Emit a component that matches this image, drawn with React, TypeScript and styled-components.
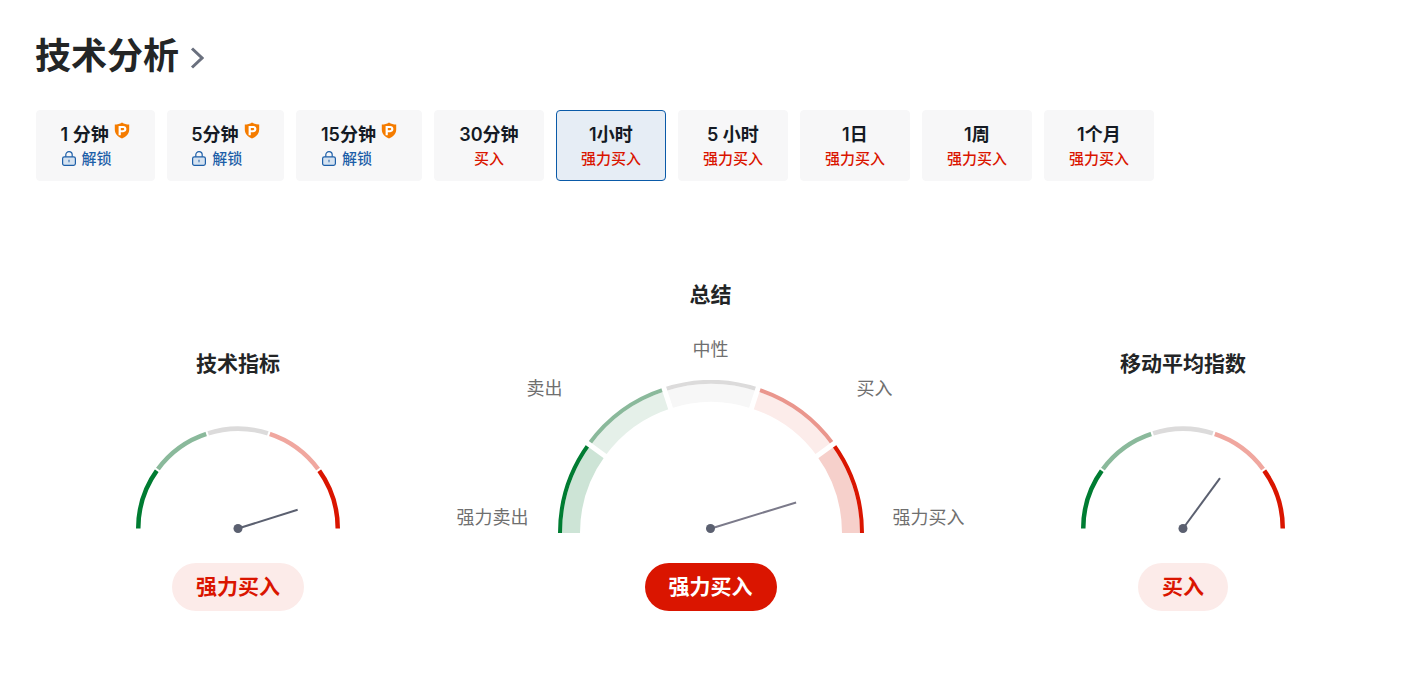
import React from 'react'
import styled, { createGlobalStyle } from 'styled-components'

const GlobalStyle = createGlobalStyle`
  body {
    margin: 0;
    background: #fff;
    font-family: Inter, 'Noto Sans CJK SC', sans-serif;
    color: #232526;
  }
`

const Page = styled.div`
  padding: 36px 36px 0;
  height: 653px;
`

const TitleRow = styled.div`
  display: flex;
  align-items: center;
  gap: 11px;
  height: 40px;
  margin-bottom: 34px;
`

const Title = styled.h2`
  margin: 0 0 0 -1px;
  font-size: 36px;
  line-height: 40px;
  font-weight: 700;
  color: #232526;
`

const Tabs = styled.div`
  display: flex;
  gap: 12px;
`

const Tab = styled.div<{ $active?: boolean; $locked?: boolean }>`
  box-sizing: border-box;
  height: 71px;
  min-width: 110px;
  padding: 0 23.5px;
  display: flex;
  flex-direction: column;
  justify-content: center;
  align-items: ${(p) => (p.$locked ? 'flex-start' : 'center')};
  gap: 2px;
  border-radius: 4px;
  background: ${(p) => (p.$active ? '#e6edf5' : '#f7f7f8')};
  border: 1px solid ${(p) => (p.$active ? '#0a5aa8' : '#f7f7f8')};
`

const TabName = styled.div`
  display: flex;
  align-items: flex-start;
  gap: 5.5px;
  font-size: 18px;
  line-height: 24px;
  font-weight: 600;
  color: #141a24;
  white-space: nowrap;
`

const TabSignal = styled.div`
  font-size: 15px;
  line-height: 20px;
  font-weight: 500;
  color: #da1500;
  white-space: nowrap;
`

const Unlock = styled.div`
  display: flex;
  align-items: center;
  gap: 6px;
  margin-left: 1px;
  font-size: 15px;
  line-height: 20px;
  font-weight: 500;
  color: #1e5fa8;
  white-space: nowrap;
`

const GaugeGrid = styled.div`
  display: grid;
  grid-template-columns: 404px 1fr 404px;
  align-items: end;
  margin-top: 100px;
`

const GaugeColumn = styled.div`
  display: flex;
  flex-direction: column;
  align-items: center;
`

const GaugeTitle = styled.div<{ $large?: boolean }>`
  font-size: 21px;
  line-height: 28px;
  font-weight: 600;
  color: #232526;
  margin-bottom: ${(p) => (p.$large ? '71px' : '48px')};
`

const Dial = styled.div`
  position: relative;
  display: flex;
  margin-bottom: 30px;
`

const DialLabel = styled.span<{ $x: number; $y: number }>`
  position: absolute;
  left: ${(p) => p.$x}px;
  top: ${(p) => p.$y}px;
  transform: translate(-50%, -50%);
  font-size: 18px;
  line-height: 24px;
  color: #6f6f6f;
  white-space: nowrap;
`

const Signal = styled.div<{ $solid?: boolean }>`
  box-sizing: border-box;
  height: 48px;
  padding: 0 24px 4px;
  display: flex;
  align-items: center;
  border-radius: 24px;
  font-size: 21px;
  font-weight: 600;
  background: ${(p) => (p.$solid ? '#da1500' : '#fcebe9')};
  color: ${(p) => (p.$solid ? '#fff' : '#da1500')};
`

function Chevron() {
  return (
    <svg width="14" height="24" viewBox="0 0 14 24" fill="none" style={{ marginTop: 4 }}>
      <path d="M2 2.5 L12 12 L2 21.5" stroke="#6a707e" strokeWidth="3" />
    </svg>
  )
}

function ProBadge() {
  return (
    <svg width="16" height="17" viewBox="0 0 16 17" style={{ marginTop: -1 }}>
      <path
        d="M.8 2.6 C3.4 2.6 5.8 1.8 8 .4 C10.2 1.8 12.6 2.6 15.2 2.6 V7.6 C15.2 11.8 12.2 15 8 16.6 C3.8 15 .8 11.8 .8 7.6 Z"
        fill="#f57c00"
      />
      <path
        d="M4.6 4 H9.2 C11.2 4 12.4 5.3 12.4 7.1 C12.4 8.9 11.2 10.2 9.2 10.2 H6.8 V13.2 H4.6 Z"
        fill="#fff"
      />
      <path d="M6.8 5.9 H9 C9.7 5.9 10.2 6.4 10.2 7.1 C10.2 7.8 9.7 8.3 9 8.3 H6.8 Z" fill="#f57c00" />
    </svg>
  )
}

function LockIcon() {
  return (
    <svg width="14" height="15" viewBox="0 0 14 15" fill="none">
      <path d="M3.8 6 V3.8 C3.8 2 5.2 .7 7 .7 C8.8 .7 10.2 2 10.2 3.8 V6" stroke="#1e5fa8" strokeWidth="1.2" />
      <rect x=".6" y="5.8" width="12.8" height="8.6" rx="1.8" fill="#d5e2f0" stroke="#1e5fa8" strokeWidth="1.2" />
      <rect x="6.3" y="8.6" width="1.4" height="2.8" rx=".7" fill="#5d8cc0" />
    </svg>
  )
}

const rings = [
  { stroke: '#007c32', fill: '#cde4d6' },
  { stroke: '#8ab99b', fill: '#e5f0e9' },
  { stroke: '#dcdbdb', fill: '#f7f7f7' },
  { stroke: '#f0a79f', fill: '#fcecea' },
  { stroke: '#da1500', fill: '#f6d0cb' },
]

const bigRings = ['#007c32', '#8ab99b', '#dcdbdb', '#ea968d', '#da1500']

function polar(cx: number, cy: number, r: number, deg: number) {
  const a = (deg * Math.PI) / 180
  return [cx - r * Math.cos(a), cy - r * Math.sin(a)]
}

function arc(cx: number, cy: number, r: number, from: number, to: number) {
  const [x1, y1] = polar(cx, cy, r, from)
  const [x2, y2] = polar(cx, cy, r, to)
  return `M${x1} ${y1} A${r} ${r} 0 0 1 ${x2} ${y2}`
}

function GaugeDrawing({ large, needle }: { large?: boolean; needle: number }) {
  const R = large ? 153 : 102
  const cx = R
  const cy = large ? 153 : 102.5
  const pivotY = large ? 148.5 : 102.5
  const lineWidth = large ? 4 : 4.5
  const gap = large ? 5 : 2
  const length = large ? 89 : 62.5
  const tip = polar(cx, pivotY, length, 180 - needle)
  return (
    <svg width={R * 2} height={large ? 153 : 107} viewBox={`0 0 ${R * 2} ${large ? 153 : 107}`} fill="none">
      {rings.map((ring, i) => (
        <g key={i}>
          {large && (
            <path d={arc(cx, cy, 140, i * 36, (i + 1) * 36)} stroke={ring.fill} strokeWidth={18} />
          )}
          <path
            d={arc(cx, cy, R - lineWidth / 2, i * 36, (i + 1) * 36)}
            stroke={large ? bigRings[i] : ring.stroke}
            strokeWidth={lineWidth}
          />
        </g>
      ))}
      {[36, 72, 108, 144].map((deg) => {
        const [x1, y1] = polar(cx, cy, R - (large ? 30 : 8), deg)
        const [x2, y2] = polar(cx, cy, R + 2, deg)
        return <line key={deg} x1={x1} y1={y1} x2={x2} y2={y2} stroke="#fff" strokeWidth={gap} />
      })}
      <line
        x1={cx}
        y1={pivotY}
        x2={tip[0]}
        y2={tip[1]}
        stroke={large ? '#7b7a8a' : '#5b6070'}
        strokeWidth="2"
      />
      <circle cx={large ? cx - 0.5 : cx} cy={pivotY} r="4.5" fill="#5b6070" />
    </svg>
  )
}

const tabs = [
  { name: '1 分钟', locked: true },
  { name: '5分钟', locked: true },
  { name: '15分钟', locked: true },
  { name: '30分钟', signal: '买入' },
  { name: '1小时', signal: '强力买入', active: true },
  { name: '5 小时', signal: '强力买入' },
  { name: '1日', signal: '强力买入' },
  { name: '1周', signal: '强力买入' },
  { name: '1个月', signal: '强力买入' },
]

export default function App() {
  return (
    <Page>
      <GlobalStyle />
      <TitleRow>
        <Title>技术分析</Title>
        <Chevron />
      </TitleRow>
      <Tabs>
        {tabs.map((tab) => (
          <Tab key={tab.name} $active={tab.active} $locked={tab.locked}>
            <TabName>
              {tab.name}
              {tab.locked && <ProBadge />}
            </TabName>
            {tab.locked ? (
              <Unlock>
                <LockIcon />
                解锁
              </Unlock>
            ) : (
              <TabSignal>{tab.signal}</TabSignal>
            )}
          </Tab>
        ))}
      </Tabs>
      <GaugeGrid>
        <GaugeColumn>
          <GaugeTitle>技术指标</GaugeTitle>
          <Dial>
            <GaugeDrawing needle={17.4} />
          </Dial>
          <Signal>强力买入</Signal>
        </GaugeColumn>
        <GaugeColumn>
          <GaugeTitle $large>总结</GaugeTitle>
          <Dial>
            <GaugeDrawing large needle={17} />
            <DialLabel $x={153} $y={-30}>中性</DialLabel>
            <DialLabel $x={-13} $y={9}>卖出</DialLabel>
            <DialLabel $x={317} $y={9}>买入</DialLabel>
            <DialLabel $x={-65} $y={138}>强力卖出</DialLabel>
            <DialLabel $x={371} $y={138}>强力买入</DialLabel>
          </Dial>
          <Signal $solid>强力买入</Signal>
        </GaugeColumn>
        <GaugeColumn>
          <GaugeTitle>移动平均指数</GaugeTitle>
          <Dial>
            <GaugeDrawing needle={53.7} />
          </Dial>
          <Signal>买入</Signal>
        </GaugeColumn>
      </GaugeGrid>
    </Page>
  )
}
